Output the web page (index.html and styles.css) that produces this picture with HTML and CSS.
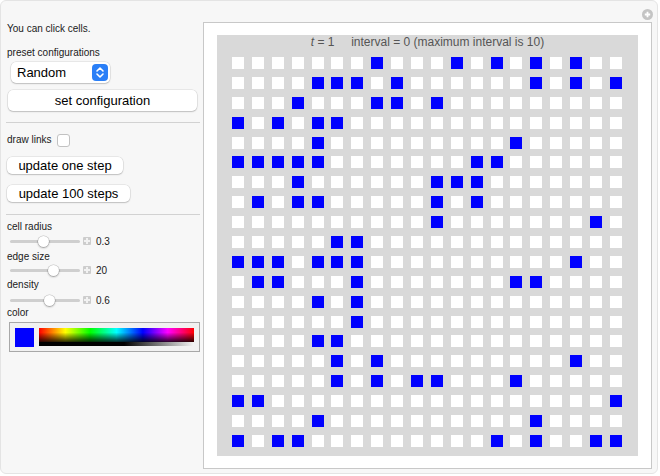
FILE: index.html
```html
<!DOCTYPE html>
<html>
<head>
<meta charset="utf-8">
<link rel="stylesheet" href="styles.css">
</head>
<body>
<div class="frame">
  <div class="left">
    <div class="txt note">You can click cells.</div>
    <div class="txt label-preset">preset configurations</div>
    <div class="popup"><span class="popup-text">Random</span><span class="chev"><svg width="16" height="17" viewBox="0 0 16 17"><path d="M5 7 L8 4 L11 7 M5 10 L8 13 L11 10" fill="none" stroke="#fff" stroke-width="1.6" stroke-linecap="round" stroke-linejoin="round"/></svg></span></div>
    <div class="btn btn-wide">set configuration</div>
    <div class="sep sep1"></div>
    <div class="check-row"><span class="txt">draw links</span><span class="checkbox"></span></div>
    <div class="btn btn-step">update one step</div>
    <div class="btn btn-steps">update 100 steps</div>
    <div class="sep sep2"></div>
    <div class="txt lbl lbl1">cell radius</div>
    <div class="slider s1"><div class="track"><span class="thumb t1"></span></div><span class="plus"></span><span class="val">0.3</span></div>
    <div class="txt lbl lbl2">edge size</div>
    <div class="slider s2"><div class="track"><span class="thumb t2"></span></div><span class="plus"></span><span class="val">20</span></div>
    <div class="txt lbl lbl3">density</div>
    <div class="slider s3"><div class="track"><span class="thumb t3"></span></div><span class="plus"></span><span class="val">0.6</span></div>
    <div class="txt lbl lbl4">color</div>
    <div class="colorbox"><span class="swatch"></span><span class="spectrum"></span></div>
  </div>
  <div class="main">
    <div class="board">
      <div class="title"><em class="var">t</em> = 1&nbsp;&nbsp;&nbsp;&nbsp;&nbsp;interval = 0 (maximum interval is 10)</div>
      <div class="grid">
<i></i><i></i><i></i><i></i><i></i><i></i><i></i><i class="on"></i><i></i><i></i><i></i><i class="on"></i><i></i><i class="on"></i><i></i><i class="on"></i><i></i><i class="on"></i><i></i><i></i>
<i></i><i></i><i></i><i></i><i class="on"></i><i class="on"></i><i class="on"></i><i></i><i class="on"></i><i></i><i></i><i></i><i></i><i></i><i></i><i class="on"></i><i></i><i class="on"></i><i></i><i class="on"></i>
<i></i><i></i><i></i><i class="on"></i><i></i><i></i><i></i><i class="on"></i><i class="on"></i><i></i><i class="on"></i><i></i><i></i><i></i><i></i><i></i><i></i><i></i><i></i><i></i>
<i class="on"></i><i></i><i class="on"></i><i></i><i class="on"></i><i class="on"></i><i></i><i></i><i></i><i></i><i></i><i></i><i></i><i></i><i></i><i></i><i></i><i></i><i></i><i></i>
<i></i><i></i><i></i><i></i><i class="on"></i><i></i><i></i><i></i><i></i><i></i><i></i><i></i><i></i><i></i><i class="on"></i><i></i><i></i><i></i><i></i><i></i>
<i class="on"></i><i class="on"></i><i class="on"></i><i class="on"></i><i class="on"></i><i></i><i></i><i></i><i></i><i></i><i></i><i></i><i class="on"></i><i class="on"></i><i></i><i></i><i></i><i></i><i></i><i></i>
<i></i><i></i><i></i><i class="on"></i><i></i><i></i><i></i><i></i><i></i><i></i><i class="on"></i><i class="on"></i><i class="on"></i><i></i><i></i><i></i><i></i><i></i><i></i><i></i>
<i></i><i class="on"></i><i></i><i class="on"></i><i class="on"></i><i></i><i></i><i></i><i></i><i></i><i class="on"></i><i></i><i class="on"></i><i></i><i></i><i></i><i></i><i></i><i></i><i></i>
<i></i><i></i><i></i><i></i><i></i><i></i><i></i><i></i><i></i><i></i><i class="on"></i><i></i><i></i><i></i><i></i><i></i><i></i><i></i><i class="on"></i><i></i>
<i></i><i></i><i></i><i></i><i></i><i class="on"></i><i class="on"></i><i></i><i></i><i></i><i></i><i></i><i></i><i></i><i></i><i></i><i></i><i></i><i></i><i></i>
<i class="on"></i><i class="on"></i><i class="on"></i><i></i><i class="on"></i><i class="on"></i><i class="on"></i><i></i><i></i><i></i><i></i><i></i><i></i><i></i><i></i><i></i><i></i><i class="on"></i><i></i><i></i>
<i></i><i class="on"></i><i class="on"></i><i></i><i></i><i></i><i class="on"></i><i></i><i></i><i></i><i></i><i></i><i></i><i></i><i class="on"></i><i class="on"></i><i></i><i></i><i></i><i></i>
<i></i><i></i><i></i><i></i><i class="on"></i><i></i><i class="on"></i><i></i><i></i><i></i><i></i><i></i><i></i><i></i><i></i><i></i><i></i><i></i><i></i><i></i>
<i></i><i></i><i></i><i></i><i></i><i></i><i class="on"></i><i></i><i></i><i></i><i></i><i></i><i></i><i></i><i></i><i></i><i></i><i></i><i></i><i></i>
<i></i><i></i><i></i><i></i><i class="on"></i><i class="on"></i><i></i><i></i><i></i><i></i><i></i><i></i><i></i><i></i><i></i><i></i><i></i><i></i><i></i><i></i>
<i></i><i></i><i></i><i></i><i></i><i class="on"></i><i></i><i class="on"></i><i></i><i></i><i></i><i></i><i></i><i></i><i></i><i></i><i></i><i class="on"></i><i></i><i></i>
<i></i><i></i><i></i><i></i><i></i><i class="on"></i><i></i><i class="on"></i><i></i><i class="on"></i><i class="on"></i><i></i><i></i><i></i><i class="on"></i><i></i><i></i><i></i><i></i><i></i>
<i class="on"></i><i class="on"></i><i></i><i></i><i></i><i></i><i></i><i></i><i></i><i></i><i></i><i></i><i></i><i></i><i></i><i></i><i></i><i></i><i></i><i class="on"></i>
<i></i><i></i><i></i><i></i><i class="on"></i><i></i><i></i><i></i><i></i><i></i><i></i><i></i><i></i><i></i><i></i><i class="on"></i><i></i><i></i><i></i><i></i>
<i class="on"></i><i></i><i class="on"></i><i class="on"></i><i></i><i></i><i></i><i></i><i></i><i></i><i></i><i></i><i></i><i class="on"></i><i></i><i class="on"></i><i></i><i></i><i class="on"></i><i class="on"></i>
      </div>
    </div>
  </div>
  <span class="pin"><svg width="11" height="11" viewBox="0 0 11 11"><circle cx="5.5" cy="5.5" r="5.5" fill="#c4c4c4"/><path d="M5.5 2.8 V8.2 M2.8 5.5 H8.2" stroke="#fff" stroke-width="1.8"/></svg></span>
</div>
</body>
</html>
```
FILE: styles.css
```css
body {
  margin: 0;
  background: #ffffff;
  font-family: "Liberation Sans", Arial, "DejaVu Sans", sans-serif;
  color: #000;
}
.frame {
  position: relative;
  width: 656px;
  height: 472px;
  border: 1px solid #e4e4e4;
  border-radius: 6px;
  background: #f7f7f7;
  display: flex;
  align-items: flex-start;
}
.left {
  width: 202px;
  flex: none;
  padding-left: 6px;
  box-sizing: border-box;
}
.txt {
  font-size: 10px;
  line-height: 12px;
  color: #1a1a1a;
}
.note { margin-top: 22px; height: 12px; }
.label-preset { margin-top: 12px; height: 12px; }
.popup {
  margin-top: 3px;
  margin-left: 4px;
  width: 99px;
  height: 21px;
  box-sizing: border-box;
  background: #fff;
  border-radius: 5px;
  box-shadow: 0 0 0 0.5px rgba(0,0,0,0.12), 0 1px 1.5px rgba(0,0,0,0.18);
  display: flex;
  align-items: center;
  justify-content: space-between;
  padding: 0 2px 0 6px;
}
.popup-text { font-size: 13px; }
.chev {
  width: 16px;
  height: 17px;
  border-radius: 4px;
  background: #2a7ff7;
  display: flex;
}
.btn {
  background: #fff;
  border-radius: 5px;
  box-shadow: 0 0 0 0.5px rgba(0,0,0,0.12), 0 1px 1.5px rgba(0,0,0,0.18);
  font-size: 13px;
  text-align: center;
  box-sizing: border-box;
}
.btn-wide {
  margin-top: 7px;
  margin-left: 1px;
  width: 189px;
  height: 21px;
  line-height: 21px;
}
.sep {
  margin-left: -1px;
  width: 194px;
  height: 1px;
  background: #d2d2d2;
}
.sep1 { margin-top: 11px; }
.sep2 { margin-top: 12px; }
.check-row {
  margin-top: 10px;
  height: 14px;
  display: flex;
  align-items: center;
}
.checkbox {
  margin-left: 6px;
  width: 13px;
  height: 13px;
  box-sizing: border-box;
  background: #fff;
  border: 1px solid #c2c2c2;
  border-radius: 3px;
}
.btn-step {
  margin-top: 10px;
  width: 116px;
  height: 17px;
  line-height: 17px;
}
.btn-steps {
  margin-top: 11px;
  width: 123px;
  height: 17px;
  line-height: 17px;
}
.lbl { height: 12px; }
.lbl1 { margin-top: 6px; }
.lbl2 { margin-top: 4px; }
.lbl3 { margin-top: 3px; }
.lbl4 { margin-top: 1px; }
.slider {
  height: 12px;
  display: flex;
  align-items: center;
}
.s1 { margin-top: 2px; }
.s2 { margin-top: 1px; }
.s3 { margin-top: 3px; }
.track {
  position: relative;
  margin-left: 3px;
  width: 70px;
  height: 3px;
  border-radius: 2px;
  background: #cfcfcf;
}
.thumb {
  position: absolute;
  top: -4px;
  width: 11px;
  height: 11px;
  border-radius: 50%;
  background: #fff;
  box-shadow: 0 0 0 0.5px rgba(0,0,0,0.2), 0 1px 2px rgba(0,0,0,0.3);
}
.t1 { left: 28px; }
.t2 { left: 38px; }
.t3 { left: 34px; }
.plus {
  position: relative;
  margin-left: 3px;
  width: 8px;
  height: 8px;
  background: #cdcdcd;
  border-radius: 1px;
}
.plus::before, .plus::after {
  content: "";
  position: absolute;
  background: #f2f2f2;
}
.plus::before { left: 3px; top: 1px; width: 2px; height: 6px; }
.plus::after { left: 1px; top: 3px; width: 6px; height: 2px; }
.val {
  margin-left: 5px;
  font-size: 10px;
  color: #1a1a1a;
}
.colorbox {
  margin-top: 3px;
  margin-left: 2px;
  width: 191px;
  height: 30px;
  box-sizing: border-box;
  border: 1px solid #a8a8a8;
  background: #f1f1f1;
  padding: 5px;
  display: flex;
  gap: 5px;
}
.swatch {
  width: 19px;
  height: 19px;
  background: #0000ff;
}
.spectrum {
  width: 155px;
  height: 18px;
  background:
    linear-gradient(to right, #000 55%, #f4f4f4) bottom / 100% 4px no-repeat,
    linear-gradient(to bottom, rgba(0,0,0,0) 25%, rgba(0,0,0,0.95) 85%),
    linear-gradient(to right, #f00, #ff0 17%, #0f0 33%, #0ff 50%, #00f 67%, #f0f 83%, #f00);
}
.main {
  margin-top: 21px;
  width: 421px;
  height: 421px;
  border: 1px solid #c8c8c8;
  background: #fff;
  padding: 12px 13px;
  flex: none;
}
.board {
  width: 421px;
  height: 421px;
  background: #d9d9d9;
}
.title {
  height: 22px;
  line-height: 14px;
  text-align: center;
  font-size: 12px;
  color: #555;
}
.var { font-style: italic; }
.grid {
  margin-left: 15px;
  display: grid;
  grid-template-columns: repeat(20, 12px);
  grid-auto-rows: 12px;
  gap: 7.9px;
}
.grid i {
  display: block;
  background: #fff;
}
.grid i.on {
  background: #0000ff;
}
.pin {
  position: absolute;
  top: 8px;
  right: 4px;
  width: 11px;
  height: 11px;
  display: flex;
}
```
